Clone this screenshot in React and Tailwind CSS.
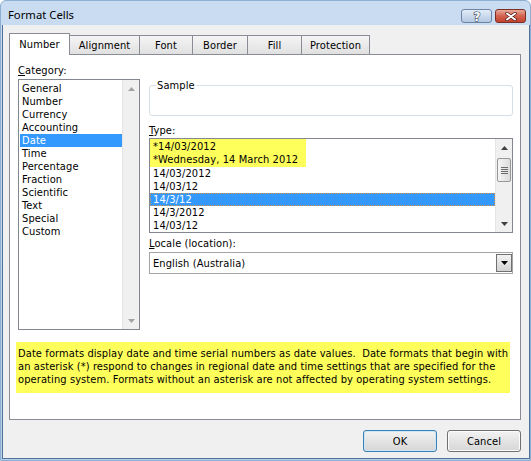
import React from 'react';

const UpArrow = ({ color }) => (
  <svg width="7" height="4" viewBox="0 0 7 4">
    <path d="M3.5 0L7 4H0z" fill={color} />
  </svg>
);

const DownArrow = ({ color }) => (
  <svg width="7" height="4" viewBox="0 0 7 4">
    <path d="M0 0H7L3.5 4z" fill={color} />
  </svg>
);

const ScrollBar = ({ enabled }) => {
  const c = enabled ? '#404040' : '#a3a3a3';
  return (
    <div className="flex w-[17px] flex-col bg-[#f0f0f0] border-l border-[#e4e4e4]">
      <div className="flex h-[17px] items-center justify-center">
        <UpArrow color={c} />
      </div>
      <div className="flex-1">
        {enabled && (
          <div className="mt-[2px] ml-[1px] flex h-[24px] w-[14px] flex-col items-center justify-center gap-[1px] rounded-[2px] border border-[#979797] bg-gradient-to-r from-[#f5f5f5] to-[#dcdcdc]">
            <div className="h-px w-[7px] bg-[#6b6b6b]" />
            <div className="h-px w-[7px] bg-[#6b6b6b]" />
            <div className="h-px w-[7px] bg-[#6b6b6b]" />
            <div className="h-px w-[7px] bg-[#6b6b6b]" />
          </div>
        )}
      </div>
      <div className="flex h-[17px] items-center justify-center">
        <DownArrow color={c} />
      </div>
    </div>
  );
};

const categories = ['General', 'Number', 'Currency', 'Accounting', 'Date', 'Time', 'Percentage', 'Fraction', 'Scientific', 'Text', 'Special', 'Custom'];
const types = ['14/03/2012', '14/03/12', '14/3/12', '14/3/2012', '14/03/12'];
const tabs = [
  { name: 'Alignment', w: 'w-[70px]' },
  { name: 'Font', w: 'w-[53px]' },
  { name: 'Border', w: 'w-[55px]' },
  { name: 'Fill', w: 'w-[54px]' },
  { name: 'Protection', w: 'w-[68px]' },
];

export default function App() {
  return (
    <div className="flex h-[461px] w-[531px] flex-col rounded-t-[6px] border border-[#8eaed2] bg-gradient-to-b from-[#c9dcf1] to-[#b9d1ea] pb-px pl-px text-[11px] leading-[13px] tracking-[0.1px] text-black font-['DejaVu_Sans_Condensed','DejaVu_Sans',sans-serif]">
      {/* title bar */}
      <div className="flex h-[24px] items-start pr-[4px]">
        <div className="pl-[6px] pt-[6px] text-[11.3px] leading-[15px] tracking-normal font-['Noto_Sans','DejaVu_Sans',sans-serif]">Format Cells</div>
        <div className="ml-auto mt-[8px] flex gap-[3px]">
          <div className="flex h-[14px] w-[31px] items-center justify-center rounded-[3px] border border-[#6b84a4] bg-gradient-to-b from-[#e4edf8] to-[#b3c8e1]">
            <svg width="10" height="12" viewBox="0 0 10 12">
              <text x="5" y="10.5" textAnchor="middle" fontSize="12" fontWeight="bold" fontFamily="DejaVu Sans, sans-serif" fill="#fff" stroke="#3b4a5e" strokeWidth="1.2" paintOrder="stroke">?</text>
            </svg>
          </div>
          <div className="flex h-[14px] w-[31px] items-center justify-center rounded-[3px] border border-[#7a2f25] bg-gradient-to-b from-[#e9a99a] via-[#d3624f] to-[#c4422f]">
            <svg width="12" height="9" viewBox="0 0 12 9">
              <path d="M2 1.5L10 7.5M10 1.5L2 7.5" stroke="#4a1a14" strokeWidth="3.4" strokeLinecap="round" />
              <path d="M2 1.5L10 7.5M10 1.5L2 7.5" stroke="#fff" strokeWidth="2" strokeLinecap="round" />
            </svg>
          </div>
        </div>
      </div>

      {/* client area */}
      <div className="flex flex-1 flex-col border-x border-b border-[#4f729b] bg-[#f0f0f0]">
        {/* tabs */}
        <div className="ml-[6px] mt-[8px] flex h-[21px] items-end">
          <div className="relative z-10 -mb-px flex h-[22px] w-[61px] items-center justify-center border-x border-t border-[#898c95] bg-white pb-[1px]">
            Number
          </div>
          {tabs.map(t => (
            <div key={t.name} className={`${t.w} flex h-[19px] items-center justify-center border-r border-t border-[#898c95] bg-gradient-to-b from-[#f5f5f5] to-[#e0e0e0]`}>
              {t.name}
            </div>
          ))}
        </div>

        {/* panel */}
        <div className="ml-[6px] flex h-[366px] w-[512px] flex-col border border-[#898c95] bg-white pl-[6px] pr-[5px] pt-[9px]">
          <div className="flex">
            {/* category column */}
            <div className="ml-[2px] w-[122px]">
              <div><span className="underline">C</span>ategory:</div>
              <div className="mt-[2px] flex h-[251px] border border-[#828790] bg-white">
                <div className="flex-1 pt-[2px] pl-px">
                  {categories.map(c => (
                    <div key={c} className={`h-[13px] pl-[2px] ${c === 'Date' ? 'bg-[#3399ff] text-white' : ''}`}>{c}</div>
                  ))}
                </div>
                <ScrollBar enabled={false} />
              </div>
            </div>

            {/* right column */}
            <div className="ml-[9px] w-[364px]">
              <fieldset className="mt-[15px] h-[37px] rounded-[3px] border border-[#d5dfe5] px-[6px]">
                <legend className="px-px">Sample</legend>
              </fieldset>

              <div className="mt-[8px]"><span className="underline">T</span>ype:</div>
              <div className="mt-px flex h-[95px] overflow-hidden border border-[#828790] bg-white">
                <div className="flex-1 overflow-hidden">
                  <div className="w-[156px] bg-[#ffff5c] py-px">
                    <div className="h-[13px] pl-[3px]">*14/03/2012</div>
                    <div className="h-[13px] pl-[3px] whitespace-nowrap">*Wednesday, 14 March 2012</div>
                  </div>
                  {types.map((t, i) => (
                    <div
                      key={i}
                      className={`h-[13px] pl-[3px] ${i === 2 ? 'bg-[#3399ff] text-white outline-1 outline-dotted outline-[#d9924a] -outline-offset-1' : ''}`}
                    >
                      {t}
                    </div>
                  ))}
                </div>
                <ScrollBar enabled />
              </div>

              <div className="mt-[4px]"><span className="underline">L</span>ocale (location):</div>
              <div className="mt-[2px] flex h-[22px] items-center border border-[#a5a5a5] bg-white">
                <div className="flex-1 pl-[3px]">English (Australia)</div>
                <div className="flex h-[18px] w-[16px] items-center justify-center border border-[#707070] bg-gradient-to-b from-[#f3f3f3] to-[#d2d2d2]">
                  <DownArrow color="#000" />
                </div>
              </div>
            </div>
          </div>

          {/* description */}
          <div className="mt-[12px] h-[51px] w-[494px] whitespace-nowrap bg-[#ffff5c] pl-[2px] pt-[5px]">
            Date formats display date and time serial numbers as date values.&nbsp; Date formats that begin with
            <br />
            an asterisk (*) respond to changes in regional date and time settings that are specified for the
            <br />
            operating system. Formats without an asterisk are not affected by operating system settings.
          </div>
        </div>

        {/* buttons */}
        <div className="ml-[6px] mt-[10px] flex w-[512px] justify-end gap-[10px]">
          <button className="h-[22px] w-[74px] rounded-[3px] border border-[#3c7fb1] bg-gradient-to-b from-[#f2f2f2] to-[#d6d6d6] shadow-[inset_0_0_0_1px_#c9e6fb]">
            OK
          </button>
          <button className="h-[22px] w-[74px] rounded-[3px] border border-[#707070] bg-gradient-to-b from-[#f2f2f2] to-[#d6d6d6] shadow-[inset_0_0_0_1px_#fcfcfc]">
            Cancel
          </button>
        </div>
      </div>
    </div>
  );
}
